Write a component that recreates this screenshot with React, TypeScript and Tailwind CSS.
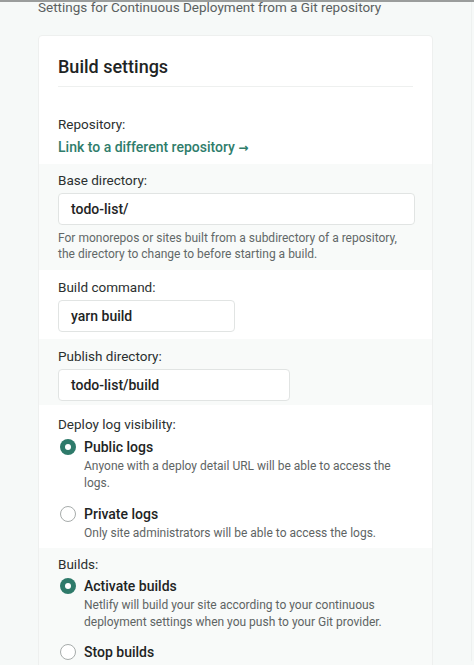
import React from 'react';

const font = { fontFamily: 'Roboto, "Liberation Sans", sans-serif' };

const Radio: React.FC<{ checked?: boolean }> = ({ checked }) =>
  checked ? (
    <span className="ml-[2px] mt-[1px] flex h-[16px] w-[16px] shrink-0 items-center justify-center rounded-full bg-[#2e7a6a]">
      <span className="h-[6px] w-[6px] rounded-full bg-white" />
    </span>
  ) : (
    <span className="ml-[2px] mt-[1px] h-[16px] w-[16px] shrink-0 rounded-full border-[1.5px] border-[#a7acab] bg-white" />
  );

const Option: React.FC<{ checked?: boolean; title: string; desc?: string }> = ({ checked, title, desc }) => (
  <div className="flex gap-[8px]">
    <Radio checked={checked} />
    <div>
      <p className="text-[14px] font-medium leading-[18px] text-[#1e2424]">{title}</p>
      {desc && <p className="mt-[2px] w-[318px] text-[12px] leading-[17px] text-[#5e6464]">{desc}</p>}
    </div>
  </div>
);

const Field: React.FC<{
  label: string;
  value: string;
  width: string;
  gray?: boolean;
  help?: string;
  pad: string;
}> = ({ label, value, width, gray, help, pad }) => (
  <div className={`px-[19px] ${pad} ${gray ? 'bg-[#f8faf9]' : 'bg-white'}`}>
    <p className="text-[13.5px] leading-[18px] text-[#2b3030]">{label}</p>
    <div
      className={`mt-[4px] flex h-[32px] items-center rounded-[4px] border border-[#e1e4e3] bg-white px-[12px] text-[14px] font-medium text-[#1e2424] ${width}`}
    >
      {value}
    </div>
    {help && <p className="mt-[5px] text-[12px] leading-[16px] text-[#626868]">{help}</p>}
  </div>
);

const App: React.FC = () => (
  <div className="h-[665px] overflow-hidden border-t-2 border-[#9a9d9c] bg-[#f6f9f8]" style={font}>
    <div className="mr-[2px] h-full border-r border-[#eef1f0] px-[38px]">
      <p className="-mt-[4px] text-[13.5px] leading-[18px] text-[#5a6060]">
        Settings for Continuous Deployment from a Git repository
      </p>
      <div className="mt-[19px] overflow-hidden rounded-[4px] border border-[#eef0ef] bg-white">
        <div className="px-[19px] pt-[17px]">
          <h2 className="pb-[5px] text-[18px] font-medium leading-[28px] text-[#1e2424]">Build settings</h2>
          <div className="border-b border-[#eef0ef]" />
        </div>
        <div className="px-[19px] pb-[7px] pt-[28px]">
          <p className="text-[13.5px] leading-[18px] text-[#2b3030]">Repository:</p>
          <p className="mt-[5px] text-[14px] font-medium leading-[18px] text-[#2f7d6b]">
            Link to a different repository{' '}
            <span className="font-bold" style={{ fontFamily: '"DejaVu Sans", sans-serif', fontSize: '12px' }}>
              →
            </span>
          </p>
        </div>
        <Field
          gray
          pad="pt-[7px] pb-[8px]"
          label="Base directory:"
          value="todo-list/"
          width="w-[357px]"
          help="For monorepos or sites built from a subdirectory of a repository, the directory to change to before starting a build."
        />
        <Field pad="pt-[8px] pb-[7px]" label="Build command:" value="yarn build" width="w-[177px]" />
        <Field gray pad="pt-[8px] pb-[4px]" label="Publish directory:" value="todo-list/build" width="w-[232px]" />
        <div className="bg-white px-[19px] pb-[6px] pt-[10px]">
          <p className="text-[13.5px] leading-[18px] text-[#2b3030]">Deploy log visibility:</p>
          <div className="mt-[5px] flex flex-col gap-[13px]">
            <Option checked title="Public logs" desc="Anyone with a deploy detail URL will be able to access the logs." />
            <Option title="Private logs" desc="Only site administrators will be able to access the logs." />
          </div>
        </div>
        <div className="bg-[#f8faf9] px-[19px] pb-[20px] pt-[7px]">
          <p className="text-[13.5px] leading-[18px] text-[#2b3030]">Builds:</p>
          <div className="mt-[4px] flex flex-col gap-[12px]">
            <Option
              checked
              title="Activate builds"
              desc="Netlify will build your site according to your continuous deployment settings when you push to your Git provider."
            />
            <Option title="Stop builds" />
          </div>
        </div>
      </div>
    </div>
  </div>
);

export default App;
